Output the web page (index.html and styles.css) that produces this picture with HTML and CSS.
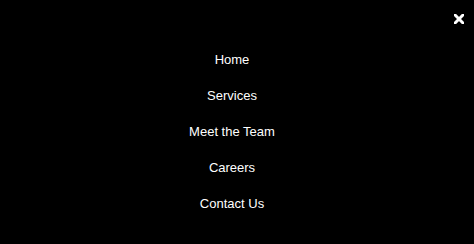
FILE: index.html
```html
<!DOCTYPE html>
<html>
<head>
<meta charset="utf-8">
<link rel="stylesheet" href="styles.css">
</head>
<body>
<div class="overlay">
  <button class="close" aria-label="Close">
    <svg width="10" height="10" viewBox="0 0 10 10"><path d="M1 1L9 9M9 1L1 9" stroke="#fff" stroke-width="3" stroke-linecap="square"/></svg>
  </button>
  <nav class="menu">
    <a href="#">Home</a>
    <a href="#">Services</a>
    <a href="#">Meet the Team</a>
    <a href="#">Careers</a>
    <a href="#">Contact Us</a>
  </nav>
</div>
</body>
</html>
```
FILE: styles.css
```css
html, body {
  margin: 0;
  padding: 0;
  background: #000;
  height: 100%;
}
.overlay {
  position: relative;
  height: 100%;
  background: #000;
  font-family: "Liberation Sans", Arial, sans-serif;
  font-size: 13px;
}
.close {
  position: absolute;
  top: 14px;
  left: 454px;
  width: 10px;
  height: 10px;
  padding: 0;
  border: 0;
  background: none;
  display: block;
  cursor: pointer;
}
.close svg {
  display: block;
}
.menu {
  display: flex;
  flex-direction: column;
  align-items: center;
  padding-top: 42px;
  width: 464px;
}
.menu a {
  color: #fff;
  text-decoration: none;
  line-height: 36px;
}
```
